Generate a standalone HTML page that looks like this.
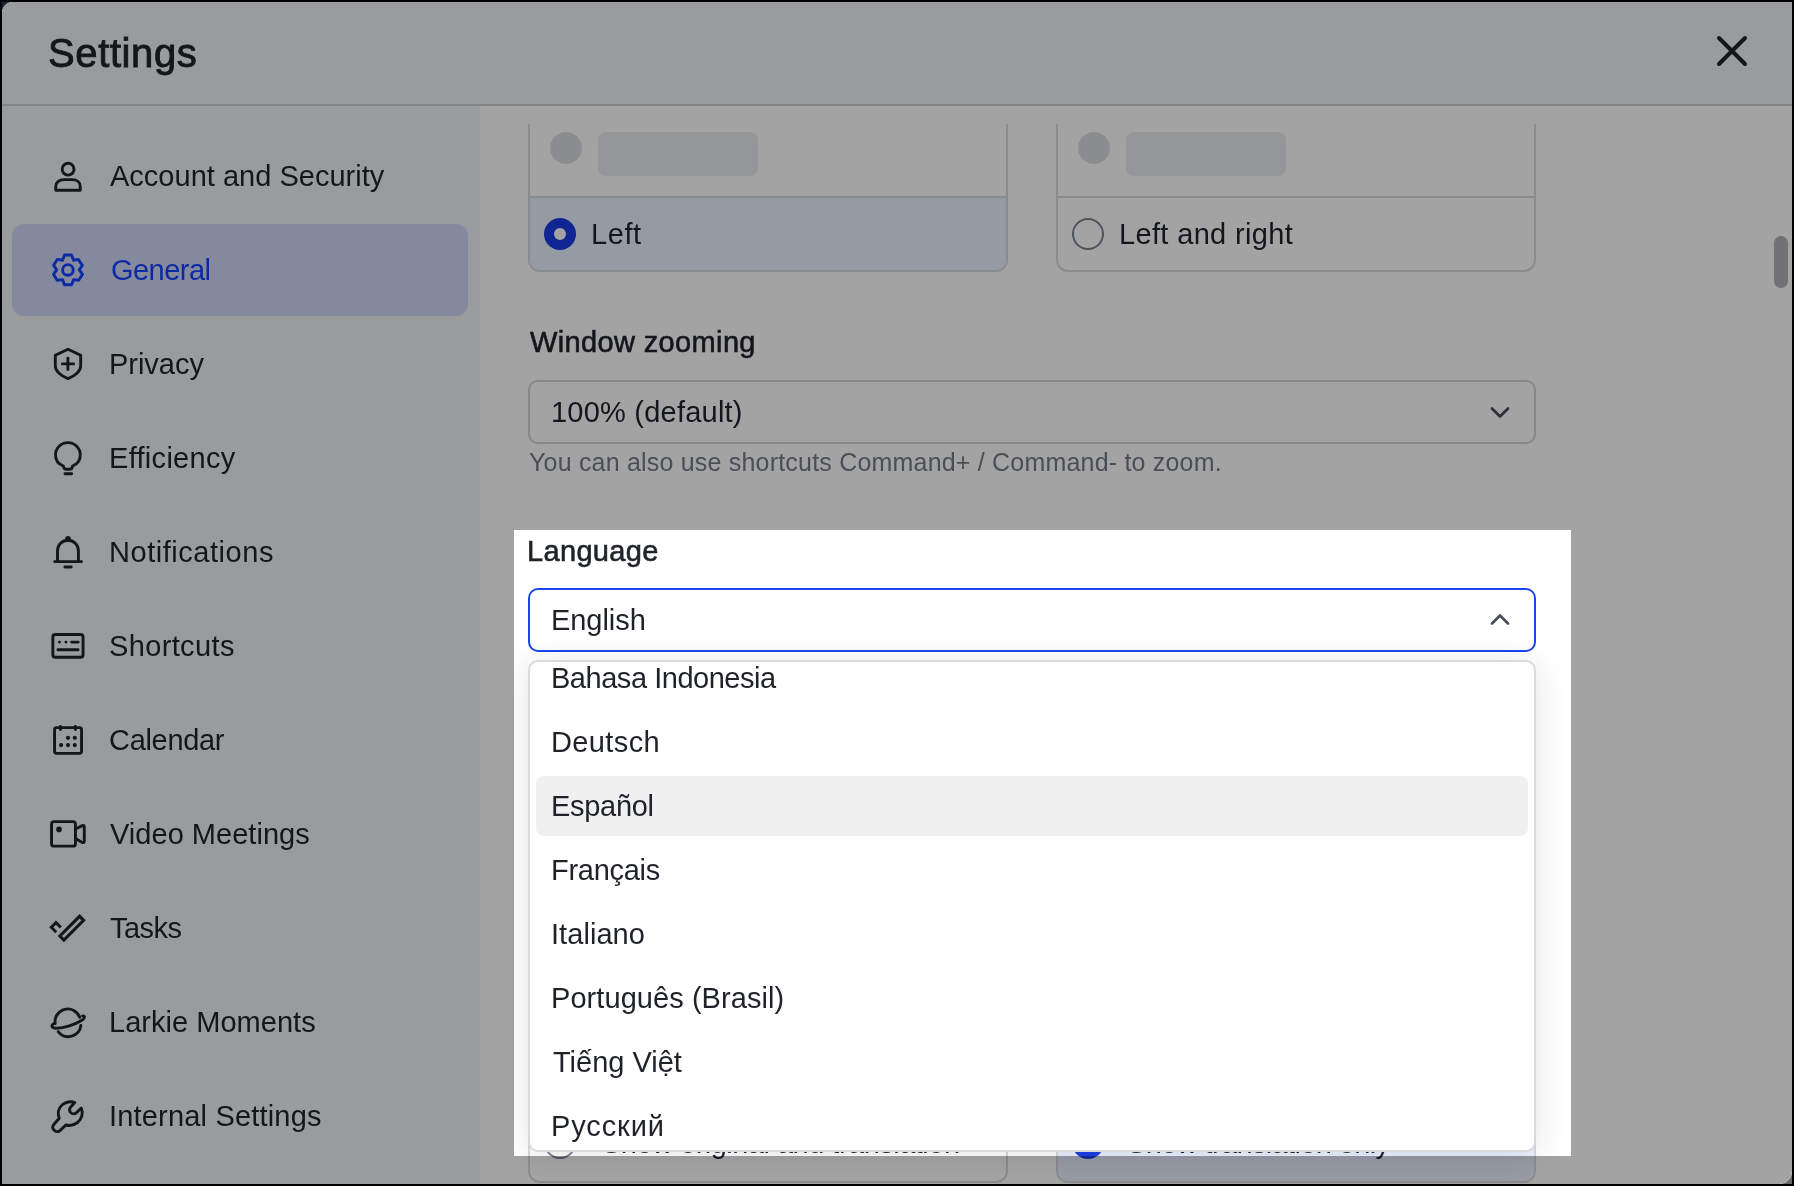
<!DOCTYPE html>
<html><head><meta charset="utf-8">
<style>
*{box-sizing:border-box;margin:0;padding:0}
html,body{width:1794px;height:1186px;overflow:hidden;background:#000;font-family:"Liberation Sans",sans-serif;color:#1f2329}
.a{position:absolute}
.tx{position:absolute;white-space:nowrap;font-family:"Liberation Sans",sans-serif;will-change:transform}
.bm{display:inline-block;width:0;height:0;vertical-align:baseline}
#win{position:absolute;left:0;top:0;width:1794px;height:1186px;overflow:hidden;background:#fff;clip-path:inset(2px 2px 2px 2px round 11px 0 13px 0)}
#c1{position:absolute;left:2px;top:2px;width:14px;height:14px;background:#1c2438}
#c2{position:absolute;left:1778px;top:1170px;width:14px;height:14px;background:#6a6a6a}
.hdr{left:2px;top:2px;width:1790px;height:102px;background:#f1f2f6}
.hline{left:2px;top:104px;width:1790px;height:2px;background:#cfd1d6}
.side{left:2px;top:106px;width:478px;height:1080px;background:#f1f2f6}
.nav{position:absolute;left:12px;width:456px;height:92px;border-radius:12px}
.nav.sel{background:#cfd7f7}
.nav svg{position:absolute;left:28px;top:21px;width:60px;height:50px;fill:none;stroke:#1f2329;stroke-width:2.9;stroke-linecap:round;stroke-linejoin:round}
.nav.sel svg{stroke:#1442ff}
.card{position:absolute;width:480px;border:2px solid #d7d9dc;border-radius:12px;background:#fff;overflow:hidden}
.card .prev{position:absolute;left:0;top:0;width:100%;border-bottom:2px solid #d7d9dc}
.radio{position:absolute;width:32px;height:32px;border-radius:50%;border:2px solid #7c838e;background:#fff}
.radio.on{border:10px solid #1a3ee6}
.select{position:absolute;left:528px;width:1008px;height:63px;border:2px solid #d0d3d6;border-radius:10px;background:#fff}
.ph{position:absolute;background:#eaebed}
</style></head><body>
<div id="c1"></div>
<div id="c2"></div>
<div id="win">
  <div class="a hdr"></div>
  <div class="a hline"></div>
  <div id="t_settings" class="tx" style="left:48.40px;top:27.70px;font-size:40px;line-height:50px;letter-spacing:0.617px;color:#1f2329;-webkit-text-stroke:0.9px #1f2329;">Settings<i class="bm"></i></div>
  <svg class="a" style="left:1700px;top:19px" width="64" height="64" viewBox="0 0 64 64"><path d="M19 19 L45 45 M45 19 L19 45" stroke="#1f2329" stroke-width="4" stroke-linecap="round"/></svg>
  <div class="a side"></div>

  <!-- NAV -->
  <div class="nav" style="top:130px"><svg viewBox="0 0 60 50"><circle cx="28.1" cy="18.2" r="5.9"/><path d="M15.75 39.25 V35.5 C15.75 31.5 19 28.65 24 28.65 H32 C37 28.65 40.25 31.5 40.25 35.5 V39.25 Z"/></svg></div>
  <div class="nav sel" style="top:224px"><svg viewBox="0 0 60 50"><path d="M24.5 10 H31.5 L33.6 15.2 L38.2 14.4 L42.4 20.3 L39.3 24.9 L42.5 29.3 L38.7 35.2 L33.6 34.6 L31.6 39.7 H24.4 L22.6 34.6 L17.2 35.3 L13.6 29.4 L16.6 24.9 L13.6 20.3 L17.3 14.4 L22.6 15.2 Z"/><circle cx="27.9" cy="24.9" r="5.3"/></svg></div>
  <div class="nav" style="top:318px"><svg viewBox="0 0 60 50"><path d="M28 10.2 L40.7 16.2 V27 C40.7 32 35 37 28 39.6 C21 37 15.3 32 15.3 27 V16.2 Z"/><path d="M22.4 24.9 H33.6 M27.9 19.3 V30.5"/></svg></div>
  <div class="nav" style="top:412px"><svg viewBox="0 0 60 50"><path d="M23.4 33 C18.5 31 15.5 26.8 15.5 21.9 C15.5 15 21 9.6 27.9 9.6 C34.8 9.6 40.3 15 40.3 21.9 C40.3 26.8 37.3 31 32.6 33 L32.3 34 C31.9 35.4 30.9 36.2 29.5 36.2 H26.3 C24.9 36.2 23.9 35.4 23.6 34 Z"/><path d="M25 40.7 H31.7"/></svg></div>
  <div class="nav" style="top:506px"><svg viewBox="0 0 60 50"><path d="M17.5 34.6 V23.65 A10.45 10.45 0 0 1 38.4 23.65 V34.6 M14.6 34.6 H41.5 M24.9 40 H31.2"/><circle cx="28" cy="11.8" r="1.4" fill="#1f2329"/></svg></div>
  <div class="nav" style="top:600px"><svg viewBox="0 0 60 50"><rect x="12.85" y="13.45" width="30.2" height="22.8" rx="2.5"/><path d="M19.4 21.1 h0.1 M25.9 21.1 h0.1 M31.6 21.1 H38.2 M17.9 28.7 H38.1"/></svg></div>
  <div class="nav" style="top:694px"><svg viewBox="0 0 60 50"><rect x="14.55" y="12.65" width="27" height="25.7" rx="2"/><path d="M20.4 11.4 V14.6 M35.4 11.4 V14.6"/><g fill="#1f2329" stroke="none"><circle cx="28" cy="22.8" r="2.1"/><circle cx="34.8" cy="22.8" r="2.1"/><circle cx="21.1" cy="30.1" r="2.1"/><circle cx="28" cy="30.1" r="2.1"/><circle cx="34.8" cy="30.1" r="2.1"/></g></svg></div>
  <div class="nav" style="top:788px"><svg viewBox="0 0 60 50"><rect x="11.55" y="12.65" width="23.9" height="24.5" rx="2.5"/><path d="M35.45 20 L42.3 16.6 C43.3 16.1 44.3 16.7 44.3 17.8 V32.2 C44.3 33.3 43.3 33.9 42.3 33.4 L35.45 29.6"/><circle cx="19" cy="20.4" r="2.8" fill="#1f2329" stroke="none"/></svg></div>
  <div class="nav" style="top:882px"><svg viewBox="0 0 60 50"><path d="M20.8 24.4 L16 19.6 L11.3 24.3 L16.2 29.2" stroke-linecap="butt" stroke-linejoin="miter"/><path d="M19.9 33 L39.6 13.3 L43.6 17.3 L23.9 37 Z" stroke-width="3.1" stroke-linejoin="miter"/></svg></div>
  <div class="nav" style="top:976px"><svg viewBox="0 0 60 50"><path d="M15.2 26.5 A12.7 12.7 0 0 1 39.7 20.3"/><path d="M40.9 28.4 A12.7 12.7 0 0 1 18.2 34.6"/><path d="M14 26.6 C10.5 28.6 11.5 31.4 16.5 31.3 C24 31.2 35 27.5 41.5 23.5 C45.5 21 45 18.6 42.6 18.9"/></svg></div>
  <div class="nav" style="top:1070px"><svg viewBox="0 0 60 50"><path d="M19.2 27.3 C17.5 23 18 17.5 22 14 C25.5 10.8 31 10 34.8 11.5 L30.5 16.2 C28.8 18.5 29.5 21.5 32 22.5 C34 23.3 36 22.5 37.3 21 L41.3 17 C43.3 22 42 28 37.5 31.5 C34 34.3 29.5 35 25.8 34 L20 39.6 C18.5 41 16 41 14.5 39.5 L13.8 38.8 C12.3 37.3 12.3 35 13.8 33.5 Z"/></svg></div>
  <div id="t_account" class="tx" style="left:110.32px;top:157.90px;font-size:29px;line-height:36px;letter-spacing:0.009px;color:#1f2329;">Account and Security<i class="bm"></i></div>
  <div id="t_general" class="tx" style="left:110.84px;top:251.90px;font-size:29px;line-height:36px;letter-spacing:-0.540px;color:#1442ff;">General<i class="bm"></i></div>
  <div id="t_privacy" class="tx" style="left:108.52px;top:345.90px;font-size:29px;line-height:36px;letter-spacing:-0.030px;color:#1f2329;">Privacy<i class="bm"></i></div>
  <div id="t_eff" class="tx" style="left:108.52px;top:439.90px;font-size:29px;line-height:36px;letter-spacing:0.300px;color:#1f2329;">Efficiency<i class="bm"></i></div>
  <div id="t_notif" class="tx" style="left:108.52px;top:533.90px;font-size:29px;line-height:36px;letter-spacing:0.540px;color:#1f2329;">Notifications<i class="bm"></i></div>
  <div id="t_short" class="tx" style="left:109.42px;top:627.90px;font-size:29px;line-height:36px;letter-spacing:0.360px;color:#1f2329;">Shortcuts<i class="bm"></i></div>
  <div id="t_cal" class="tx" style="left:109.42px;top:721.90px;font-size:29px;line-height:36px;letter-spacing:-0.309px;color:#1f2329;">Calendar<i class="bm"></i></div>
  <div id="t_video" class="tx" style="left:110.32px;top:815.90px;font-size:29px;line-height:36px;letter-spacing:0.028px;color:#1f2329;">Video Meetings<i class="bm"></i></div>
  <div id="t_tasks" class="tx" style="left:110.32px;top:909.90px;font-size:29px;line-height:36px;letter-spacing:-0.540px;color:#1f2329;">Tasks<i class="bm"></i></div>
  <div id="t_larkie" class="tx" style="left:108.52px;top:1003.90px;font-size:29px;line-height:36px;letter-spacing:0.028px;color:#1f2329;">Larkie Moments<i class="bm"></i></div>
  <div id="t_internal" class="tx" style="left:108.52px;top:1097.90px;font-size:29px;line-height:36px;letter-spacing:0.180px;color:#1f2329;">Internal Settings<i class="bm"></i></div>

  <!-- CONTENT -->
  <div class="a" style="left:480px;top:106px;width:1312px;height:1080px;background:#fff"></div>
  <div class="a" style="left:480px;top:124px;width:1312px;height:1061px;overflow:hidden">
   <div class="a" style="left:-480px;top:-124px;width:1794px;height:1186px">
    <!-- card 1 -->
    <div class="card" style="left:528px;top:40px;height:232px">
      <div class="a" style="left:0;top:156px;width:476px;height:74px;background:#ebf1ff"></div>
      <div class="prev" style="height:156px"></div>
      <div class="ph" style="left:20px;top:90px;width:32px;height:32px;border-radius:50%;background:#dcdde0"></div>
      <div class="ph" style="left:68px;top:90px;width:160px;height:44px;border-radius:8px"></div>
    </div>
    <div class="radio on" style="left:544px;top:218px"></div>
    <!-- card 2 -->
    <div class="card" style="left:1056px;top:40px;height:232px">
      <div class="prev" style="height:156px"></div>
      <div class="ph" style="left:20px;top:90px;width:32px;height:32px;border-radius:50%;background:#dcdde0"></div>
      <div class="ph" style="left:68px;top:90px;width:160px;height:44px;border-radius:8px"></div>
    </div>
    <div class="radio" style="left:1072px;top:218px"></div>
    <div id="t_left" class="tx" style="left:591.00px;top:216.40px;font-size:29px;line-height:36px;letter-spacing:0.600px;color:#1f2329;">Left<i class="bm"></i></div>
    <div id="t_leftright" class="tx" style="left:1118.52px;top:216.40px;font-size:29px;line-height:36px;letter-spacing:0.346px;color:#1f2329;">Left and right<i class="bm"></i></div>
    <div id="t_winzoom" class="tx" style="left:529.74px;top:324.22px;font-size:29px;line-height:36px;letter-spacing:0.360px;color:#1f2329;-webkit-text-stroke:0.6px #1f2329;">Window zooming<i class="bm"></i></div>
    <div class="select" style="top:380px;height:64px"></div>
    <div id="t_100" class="tx" style="left:550.96px;top:394.01px;font-size:29px;line-height:36px;letter-spacing:0.222px;color:#1f2329;">100% (default)<i class="bm"></i></div>
    <svg class="a" style="left:1484px;top:397px" width="32" height="32" viewBox="0 0 32 32"><path d="M8 11.5 L16 19.5 L24 11.5" fill="none" stroke="#4a4f57" stroke-width="2.8" stroke-linecap="round" stroke-linejoin="round"/></svg>
    <div id="t_help" class="tx" style="left:529.18px;top:446.82px;font-size:25px;line-height:31px;letter-spacing:0.197px;color:#747b86;">You can also use shortcuts Command+ / Command- to zoom.<i class="bm"></i></div>

    <!-- bottom cards (underlying) -->
    <div class="card" style="left:528px;top:960px;height:223px">
      <div class="prev" style="height:147px"></div>
    </div>
    <div class="radio" style="left:544px;top:1127px"></div>
    <div class="card" style="left:1056px;top:960px;height:223px">
      <div class="a" style="left:0;top:147px;width:476px;height:74px;background:#ebf1ff"></div>
      <div class="prev" style="height:147px"></div>
    </div>
    <div class="radio on" style="left:1072px;top:1127px"></div>
    <div id="t_showorig" class="tx" style="left:602.10px;top:1125.40px;font-size:29px;line-height:36px;letter-spacing:-0.514px;color:#1f2329;">Show original and translation<i class="bm"></i></div>
    <div id="t_showtrans" class="tx" style="left:1127.10px;top:1125.40px;font-size:29px;line-height:36px;letter-spacing:-0.630px;color:#1f2329;">Show translation only<i class="bm"></i></div>

    <!-- Language section -->
    <div id="t_language" class="tx" style="left:526.54px;top:532.81px;font-size:29px;line-height:36px;letter-spacing:0.334px;color:#1f2329;-webkit-text-stroke:0.6px #1f2329;">Language<i class="bm"></i></div>
    <div class="select" style="top:588px;height:64px;border-color:#1c45f0"></div>
    <div id="t_english" class="tx" style="left:551.46px;top:602.11px;font-size:29px;line-height:36px;letter-spacing:-0.060px;color:#1f2329;">English<i class="bm"></i></div>
    <svg class="a" style="left:1484px;top:603px" width="32" height="32" viewBox="0 0 32 32"><path d="M8 20.5 L16 12.5 L24 20.5" fill="none" stroke="#4a4f57" stroke-width="2.8" stroke-linecap="round" stroke-linejoin="round"/></svg>

    <div class="a" style="left:528px;top:660px;width:1008px;height:492px;border:2px solid #d8dadd;border-radius:10px;background:#fff;box-shadow:0 4px 32px rgba(31,35,41,0.12);overflow:hidden">
     <div class="a" style="left:-530px;top:-662px;width:1794px;height:1186px">
      <div class="a" style="left:536px;top:776px;width:992px;height:60px;border-radius:8px;background:#f0f0f1"></div>
      <div id="t_bahasa" class="tx" style="left:551.46px;top:660.01px;font-size:29px;line-height:36px;letter-spacing:-0.468px;color:#1f2329;">Bahasa Indonesia<i class="bm"></i></div>
      <div id="t_deutsch" class="tx" style="left:551.46px;top:724.01px;font-size:29px;line-height:36px;letter-spacing:0.390px;color:#1f2329;">Deutsch<i class="bm"></i></div>
      <div id="t_espanol" class="tx" style="left:551.46px;top:788.01px;font-size:29px;line-height:36px;letter-spacing:-0.300px;color:#1f2329;">Español<i class="bm"></i></div>
      <div id="t_francais" class="tx" style="left:551.04px;top:852.01px;font-size:29px;line-height:36px;letter-spacing:-0.283px;color:#1f2329;">Français<i class="bm"></i></div>
      <div id="t_italiano" class="tx" style="left:551.04px;top:916.01px;font-size:29px;line-height:36px;letter-spacing:0.051px;color:#1f2329;">Italiano<i class="bm"></i></div>
      <div id="t_portugues" class="tx" style="left:551.00px;top:980.01px;font-size:29px;line-height:36px;letter-spacing:0.064px;color:#1f2329;">Português (Brasil)<i class="bm"></i></div>
      <div id="t_tieng" class="tx" style="left:552.80px;top:1044.01px;font-size:29px;line-height:36px;letter-spacing:-0.020px;color:#1f2329;">Tiếng Việt<i class="bm"></i></div>
      <div id="t_russian" class="tx" style="left:551.00px;top:1108.01px;font-size:29px;line-height:36px;letter-spacing:0.900px;color:#1f2329;">Русский<i class="bm"></i></div>
     </div>
    </div>
   </div>
  </div>
  <!-- scrollbar -->
  <div class="a" style="left:1774px;top:236px;width:14px;height:52px;border-radius:7px;background:#b1b3b6"></div>
  <!-- spotlight overlay -->
  <div class="a" style="left:514px;top:530px;width:1057px;height:626px;box-shadow:0 0 0 4000px rgba(0,0,0,0.36)"></div>
</div>
</body></html>
